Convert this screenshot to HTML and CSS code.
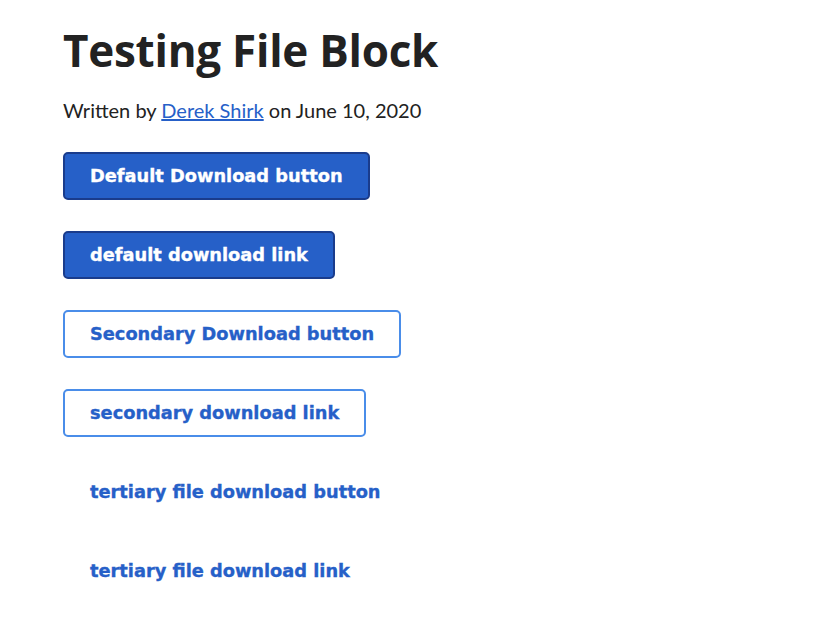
FILE: index.html
```html
<!DOCTYPE html>
<html lang="en">
<head>
<meta charset="utf-8">
<title>Testing File Block</title>
<link rel="stylesheet" href="styles.css">
</head>
<body>
<main class="page">
  <h1 class="title">Testing File Block</h1>
  <p class="byline">Written by <a class="author" href="#">Derek Shirk</a> on June 10, 2020</p>
  <div class="files">
    <button class="btn btn-default" type="button">Default Download button</button>
    <a class="btn btn-default" href="#">default download link</a>
    <button class="btn btn-secondary" type="button">Secondary Download button</button>
    <a class="btn btn-secondary" href="#">secondary download link</a>
    <button class="btn btn-tertiary" type="button">tertiary file download button</button>
    <a class="btn btn-tertiary" href="#">tertiary file download link</a>
  </div>
</main>
</body>
</html>
```

FILE: styles.css
```css
html, body {
  margin: 0;
  padding: 0;
  background: #ffffff;
}

.page {
  padding: 22px 0 0 63px;
}

.title {
  margin: 0;
  font-family: "Open Sans", "Noto Sans", sans-serif;
  font-weight: 700;
  font-size: 44px;
  line-height: 56px;
  color: #222222;
  letter-spacing: -0.25px;
}

.byline {
  margin: 20px 0 0;
  font-family: "Lato", "Noto Sans", sans-serif;
  font-size: 20px;
  line-height: 24px;
  color: #222222;
}

.author {
  color: #2660c8;
  text-decoration: underline;
}

.files {
  margin-top: 30px;
  display: flex;
  flex-direction: column;
  align-items: flex-start;
  gap: 31px;
}

.btn {
  box-sizing: border-box;
  display: inline-flex;
  align-items: center;
  height: 48px;
  padding: 0 25px 2px;
  border: 2px solid transparent;
  border-radius: 5px;
  font-family: "DejaVu Sans", Verdana, sans-serif;
  font-weight: 700;
  font-size: 17.8px;
  -webkit-text-stroke: 0.35px currentColor;
  text-decoration: none;
  background: transparent;
  cursor: pointer;
  margin: 0;
}

.btn-default {
  background: #2660c8;
  border-color: #1a3c8c;
  color: #ffffff;
}

.btn-secondary {
  background: #ffffff;
  border-color: #4a8de9;
  color: #2660c8;
}

.btn-tertiary {
  color: #2660c8;
}
```
